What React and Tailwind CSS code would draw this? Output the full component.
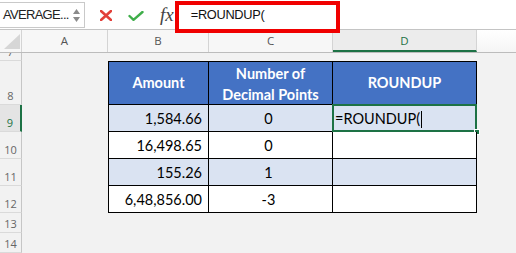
import React from "react";

const rows = [
  { n: "7", h: "h-[8px]" },
  { n: "8", h: "h-[44px]", head: true },
  { n: "9", h: "h-[27px]", amount: "1,584.66", dec: "0", shade: true, active: true },
  { n: "10", h: "h-[27px]", amount: "16,498.65", dec: "0" },
  { n: "11", h: "h-[27px]", amount: "155.26", dec: "1", shade: true },
  { n: "12", h: "h-[27px]", amount: "6,48,856.00", dec: "-3" },
  { n: "13", h: "h-[20px]" },
  { n: "14", h: "h-[20px]" },
];

function TopBar() {
  return (
    <div className="h-[30px] flex items-start bg-white border-b border-[#c4c4c4] font-['Liberation_Sans',sans-serif]">
      {/* name box */}
      <div className="mt-[2px] h-[26px] w-[85px] border border-[#c9c9c9] border-l-0 flex items-center justify-between pl-[3px] pr-[4px] bg-white">
        <span className="text-[13px] tracking-[-0.7px] text-[#222]">AVERAGE...</span>
        <span className="flex flex-col gap-[3px] items-center">
          <svg width="7" height="5" viewBox="0 0 7 5"><path d="M3.5 0L7 5H0z" fill="#8a8a8a" /></svg>
          <svg width="7" height="5" viewBox="0 0 7 5"><path d="M0 0h7L3.5 5z" fill="#8a8a8a" /></svg>
        </span>
      </div>
      <div className="flex items-center h-[30px] pl-[15px] gap-[16px]">
        <svg width="12" height="11" viewBox="0 0 12 11">
          <path d="M1 1l10 9M11 1L1 10" stroke="#e2403a" strokeWidth="2.6" strokeLinecap="round" />
        </svg>
        <svg width="16" height="10" viewBox="0 0 16 10" className="mt-[2px]">
          <path d="M1.5 5l4 3.8L14.5 1" stroke="#3fae4a" strokeWidth="2.4" fill="none" strokeLinecap="round" strokeLinejoin="round" />
        </svg>
        <span className="font-['Liberation_Serif',serif] italic text-[19px] text-[#444] leading-none -mt-[1px]">fx</span>
      </div>
      <div className="flex-1 h-[30px] ml-[5px] flex items-center pl-[12px]">
        <span className="text-[12.8px] tracking-[-0.3px] text-[#111]">=ROUNDUP(</span>
      </div>
    </div>
  );
}

function ColHeaders() {
  return (
    <div className="h-[23px] flex border-b border-[#bcbcbc] bg-[#f7f7f7] text-[11.5px] text-[#555] font-['Open_Sans',sans-serif]">
      <div className="w-[22px] border-r border-[#d4d4d4] relative">
        <svg width="16" height="15" viewBox="0 0 16 15" className="absolute left-[4px] top-[4px]">
          <path d="M16 0V15H0z" fill="#d6d6d6" />
        </svg>
      </div>
      <div className="w-[86px] border-r border-[#d4d4d4] flex items-center justify-center">A</div>
      <div className="w-[101px] border-r border-[#d4d4d4] flex items-center justify-center">B</div>
      <div className="w-[124px] border-r border-[#d4d4d4] flex items-center justify-center">C</div>
      <div className="w-[144px] border-r border-[#d4d4d4] bg-[#ececec] border-b-2 border-b-[#1d7245] flex items-center justify-center text-[#1d7245] pt-[2px]">D</div>
      <div className="flex-1 bg-gradient-to-b from-white to-[#f5f5f5]" />
    </div>
  );
}

function Row({ r }) {
  const shade = r.shade ? "bg-[#dae3f2]" : "bg-white";
  const cell = "border-r border-b border-black";
  return (
    <div className={`flex ${r.h}`}>
      <div
        className={`w-[22px] shrink-0 border-b border-[#dadada] flex items-end justify-center pb-[3px] overflow-hidden text-[11px] leading-[11px] font-['Open_Sans',sans-serif] ${
          r.active ? "bg-[#e4e4e4] text-[#1d7245] border-r-2 border-r-[#1d7245]" : "border-r border-r-[#c6c6c6] text-[#666]"
        }`}
      >
        {r.n}
      </div>
      <div className="w-[86px] shrink-0" />
      {r.head && (
        <>
          <div className={`w-[101px] ${cell} border-l border-t bg-[#4472c4] text-white font-bold flex items-center justify-center`}>
            Amount
          </div>
          <div className={`w-[124px] ${cell} border-t bg-[#4472c4] text-white font-bold flex flex-col items-center justify-center leading-[21px] pt-[1px]`}>
            <span>Number of</span>
            <span>Decimal Points</span>
          </div>
          <div className={`w-[144px] ${cell} border-t bg-[#4472c4] text-white font-bold flex items-center justify-center`}>
            ROUNDUP
          </div>
        </>
      )}
      {r.amount && (
        <>
          <div className={`w-[101px] ${cell} border-l ${shade} flex items-center justify-end pr-[6px] pt-[2px]`}>
            {r.amount}
          </div>
          <div className={`w-[124px] ${cell} ${shade} flex items-center justify-center pt-[2px] pr-[4px]`}>
            {r.dec}
          </div>
          <div className={`w-[144px] ${cell} ${shade} relative flex items-center pl-[2px] pt-[2px]`}>
            {r.active && (
              <>
                <span>=ROUNDUP(</span>
                <span className="ml-[1px] w-[1px] h-[17px] bg-black" />
                <div className="absolute -left-[1px] -top-[1px] -right-[1px] -bottom-[1px] border-2 border-[#1d7245]" />
                <div className="absolute -right-[4px] -bottom-[4px] w-[6px] h-[6px] bg-[#1d7245] border border-white" />
              </>
            )}
          </div>
        </>
      )}
    </div>
  );
}

export default function App() {
  return (
    <div className="w-[516px] h-[253px] overflow-hidden relative bg-[#f2f2f2]">
      <TopBar />
      <ColHeaders />
      <div className="font-['Lato',sans-serif] text-[14.5px] text-black">
        {rows.map((r) => (
          <Row key={r.n} r={r} />
        ))}
      </div>
      {/* red highlight around the formula */}
      <div className="absolute left-[175px] top-[1px] w-[165px] h-[32px] border-[4px] border-[#f00000]" />
    </div>
  );
}
